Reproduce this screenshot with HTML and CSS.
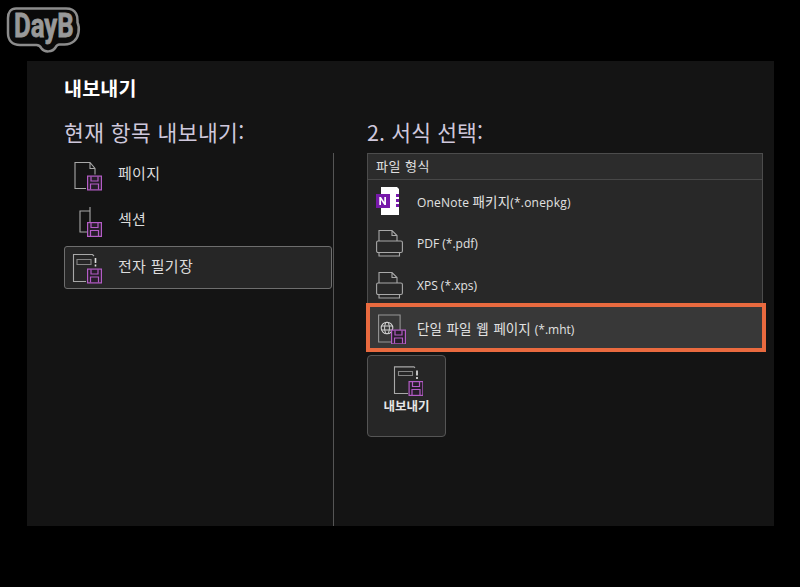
FILE: index.html
```html
<!DOCTYPE html>
<html lang="ko">
<head>
<meta charset="utf-8">
<title>내보내기</title>
<link rel="stylesheet" href="styles.css">
</head>
<body>
<svg width="0" height="0" class="defs">
  <defs>
    <g id="floppy">
      <rect x="0.6" y="0.6" width="13.8" height="13.8" fill="#261d29" stroke="#b45cc6" stroke-width="1.2"/>
      <path d="M4 1v4.500h7V1M3.500 14V8.500h8V14" fill="none" stroke="#b45cc6" stroke-width="1.200"/>
    </g>
    <g id="printer" fill="none" stroke="#a8a8a8" stroke-width="1.1">
      <path d="M3 12V1.500h13l5 5V12M16 1.500v5h5"/>
      <rect x="0.6" y="12" width="25.800" height="11.500" rx="1.500"/>
      <path d="M3 23.500v3.500h20.500v-3.500"/>
    </g>
  </defs>
</svg>
<header class="logo">
  <svg class="logo-blob" width="84" height="56" viewBox="0 0 84 56">
    <path d="M16 8.500h50c4 0 8 1 10 5 2 3 1.500 6 1.500 9 1.500 3 1.500 7 1 10-1 7-6 12-14 12h-5c-2 0-3 1-4 3-3 5-11 5-14 1-1-2-2.500-3.500-5-3.500H20c-8 0-12-5-12-12V18c0-6 3-9.500 8-9.500Z" fill="#0a0a0a" stroke="#8c8c8c" stroke-width="2.500"/>
  </svg>
  <span class="logo-text">DayB</span>
</header>
<main class="panel">
  <h1 class="title">내보내기</h1>
  <div class="columns">
    <h2 class="heading">현재 항목 내보내기:</h2>
    <h2 class="heading heading-right">2. 서식 선택:</h2>
    <ul class="scope">
      <li class="scope-item">
        <svg class="scope-icon" width="32" height="32" viewBox="0 0 32 32">
          <path d="M14 29.500H3v-26h15l5 6v6M18 3.500v6h5" fill="none" stroke="#a8a8a8" stroke-width="1.100"/>
          <use href="#floppy" x="15" y="16.500"/>
        </svg>
        <span>페이지</span>
      </li>
      <li class="scope-item">
        <svg class="scope-icon" width="32" height="32" viewBox="0 0 32 32">
          <path d="M15 27H8V6h10M18 2v15" fill="none" stroke="#a8a8a8" stroke-width="1.100"/>
          <use href="#floppy" x="15" y="17"/>
        </svg>
        <span>섹션</span>
      </li>
      <li class="scope-item selected">
        <svg class="scope-icon" width="32" height="32" viewBox="0 0 32 32">
          <path d="M14 29.500H1.500v-27h19l1.500 1.500" fill="none" stroke="#a8a8a8" stroke-width="1.100"/>
          <path d="M5 7.500h14v5H5z" fill="none" stroke="#858585" stroke-width="1.100"/>
          <path d="M23.500 6v5M23.500 12.500v2" stroke="#dcdcdc" stroke-width="1.600"/>
          <use href="#floppy" x="15" y="16.500"/>
        </svg>
        <span>전자 필기장</span>
      </li>
    </ul>
    <section class="right">
      <div class="formats">
        <div class="formats-head">파일 형식</div>
        <div class="format">
          <svg class="format-icon" width="28" height="28" viewBox="0 0 28 28">
            <path d="M5 0h16l2 2v26H5z" fill="#fff"/>
            <path d="M20 7h3v3h-3zM20 12h3v3h-3zM20 17h3v3h-3z" fill="#7719aa"/>
            <rect x="0" y="7" width="14" height="14" fill="#7719aa"/>
            <path d="M3.300 18v-8h1.700l3.300 5v-5h1.700v8H8.300l-3.300-5v5z" fill="#fff"/>
          </svg>
          <span class="wide">OneNote <span class="ko">패키지</span>(*.onepkg)</span>
        </div>
        <div class="format">
          <svg class="format-icon" width="28" height="28" viewBox="0 0 28 28"><use href="#printer"/></svg>
          <span>PDF (*.pdf)</span>
        </div>
        <div class="format">
          <svg class="format-icon" width="28" height="28" viewBox="0 0 28 28"><use href="#printer"/></svg>
          <span>XPS (*.xps)</span>
        </div>
        <div class="format highlighted">
          <svg class="format-icon" width="28" height="33" viewBox="0 0 28 33">
            <path d="M.6 4h21.500v27H.6z" fill="none" stroke="#969696" stroke-width="1.100"/>
            <circle cx="9" cy="17" r="5.800" fill="none" stroke="#d0d0d0" stroke-width="1.100"/>
            <ellipse cx="9" cy="17" rx="2.400" ry="5.800" fill="none" stroke="#d0d0d0" stroke-width="1"/>
            <path d="M3.500 15h11M3.500 19h11" stroke="#d0d0d0" stroke-width="1"/>
            <use href="#floppy" x="13" y="18.500"/>
          </svg>
          <span><span class="ko spaced">단일 파일 웹 페이지</span> (*.mht)</span>
        </div>
      </div>
      <button class="export" type="button">
        <svg width="32" height="32" viewBox="0 0 32 32">
          <path d="M17 27.500H3.500V.9h19.500l1 1.100" fill="none" stroke="#a8a8a8" stroke-width="1.100"/>
          <path d="M7.500 5.500h14v4h-14z" fill="none" stroke="#858585" stroke-width="1.100"/>
          <path d="M26 4.500v5M26 11v2" stroke="#e8e8e8" stroke-width="1.600"/>
          <use href="#floppy" x="17.500" y="15"/>
        </svg>
        <span>내보내기</span>
      </button>
    </section>
  </div>
</main>
</body>
</html>
```

FILE: styles.css
```css
* {
  box-sizing: border-box;
}

html,
body {
  margin: 0;
  padding: 0;
}

body {
  width: 800px;
  height: 587px;
  overflow: hidden;
  background: #000;
  color: #e6e6e6;
  font-family: "Noto Sans CJK KR", "Noto Sans", sans-serif;
}

.defs {
  display: block;
  height: 0;
}

.logo {
  position: relative;
  height: 61px;
}

.logo-blob {
  position: absolute;
  left: 0;
  top: 0;
}

.logo-text {
  position: absolute;
  left: 14px;
  top: 3px;
  font-family: "Roboto", sans-serif;
  font-weight: 700;
  font-size: 33px;
  line-height: 46px;
  color: #999;
  -webkit-text-stroke: 0.8px #999;
  transform: scaleX(0.78);
  transform-origin: left center;
}

.panel {
  margin-left: 27px;
  width: 747px;
  height: 465px;
  background: #141414;
  padding-top: 15px;
  display: flex;
  flex-direction: column;
}

.title {
  margin: 0 0 0 37px;
  font-size: 19.500px;
  font-weight: 700;
  letter-spacing: 0.2px;
  line-height: 24px;
  color: #fff;
}

.columns {
  flex: 1;
  display: grid;
  grid-template-columns: 306px 1fr;
  grid-template-rows: 34px 1fr;
  padding-top: 19px;
}

.heading {
  margin: 0 0 0 37px;
  font-size: 21.500px;
  font-weight: 400;
  letter-spacing: 0.4px;
  line-height: 26px;
  color: #cfc8dc;
  white-space: nowrap;
}

.heading-right {
  margin-left: 34px;
  letter-spacing: 0.1px;
}

.scope {
  list-style: none;
  margin: 0 0 0 37px;
  padding: 0;
  display: flex;
  flex-direction: column;
  gap: 3.500px;
}

.scope-item {
  width: 268px;
  height: 43px;
  display: flex;
  align-items: center;
  padding-left: 7px;
  gap: 14px;
  font-size: 15px;
  letter-spacing: 0.3px;
  color: #dcdcdc;
  border: 1px solid transparent;
  border-radius: 3px;
}

.scope-item span {
  margin-top: -5px;
}

.scope-item.selected {
  background: #262626;
  border-color: #6e6e6e;
}

.right {
  padding: 0 11px 0 33px;
  display: flex;
  flex-direction: column;
  border-left: 1px solid #555;
}

.formats {
  border: 1px solid #4c4c4c;
  border-bottom: 0;
  background: #282828;
  display: flex;
  flex-direction: column;
}

.formats-head {
  height: 26px;
  line-height: 24px;
  padding-left: 8px;
  font-size: 13px;
  letter-spacing: 0.5px;
  color: #e0e0e0;
  background: #2c2c2c;
  border-bottom: 1px solid #484848;
}

.format {
  height: 42px;
  display: flex;
  align-items: center;
  padding-left: 8px;
  gap: 13px;
  font-family: "Open Sans", "Noto Sans CJK KR", sans-serif;
  font-size: 12px;
  color: #e2e2e2;
}

.wide {
  letter-spacing: 0.2px;
}

.ko {
  font-family: "Noto Sans CJK KR", sans-serif;
  font-size: 13.500px;
}

.spaced {
  word-spacing: 1px;
  margin-right: 1px;
}

.format-icon {
  flex: none;
}

.format.highlighted {
  height: 49px;
  margin: -3px -4px 0 -2px;
  padding-left: 8px;
  background: #383838;
  border: 4px solid #e96a3f;
  gap: 11px;
}

.export {
  margin-top: 3px;
  width: 79px;
  height: 82px;
  padding: 10px 0 0;
  display: flex;
  flex-direction: column;
  align-items: center;
  background: #262626;
  border: 1px solid #555;
  border-radius: 4px;
  color: #e6e6e6;
  font-family: "Noto Sans CJK KR", sans-serif;
  font-size: 12.500px;
  font-weight: 700;
  line-height: 16px;
}
```
